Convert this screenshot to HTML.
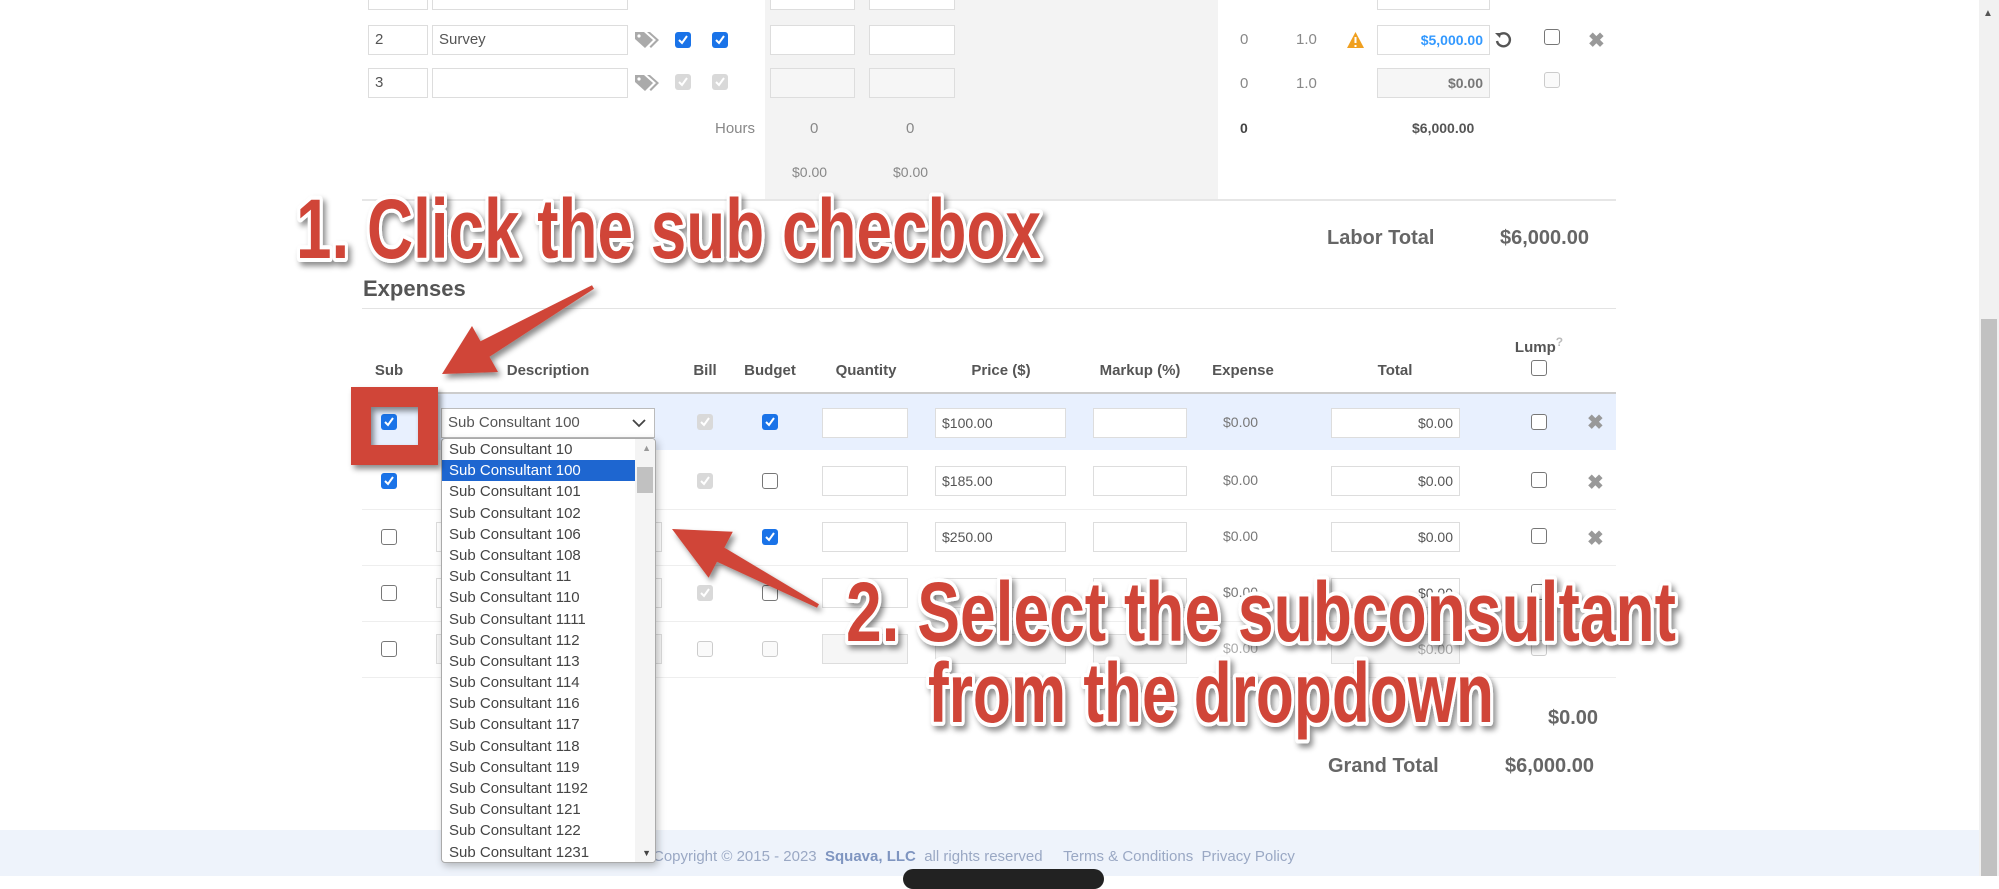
<!DOCTYPE html>
<html><head><meta charset="utf-8">
<style>
*{box-sizing:border-box;margin:0;padding:0}
body{width:1999px;height:876px;overflow:hidden;background:#fff;font-family:"Liberation Sans",Arial,sans-serif;color:#666;position:relative}
.a{position:absolute}
.in{position:absolute;background:#fff;border:1px solid #ddd;height:30px;font-size:15px;color:#555;line-height:28px;padding:0 6px}
.dis{background:#f6f6f6}
.cb{position:absolute;width:16px;height:16px;border:1.5px solid #777;border-radius:3px;background:#fff}
.cbk{position:absolute;width:16px;height:16px;border-radius:3px;background:#1a73e8}
.cbk svg,.cbg svg{position:absolute;left:2px;top:2px}
.cbg{position:absolute;width:16px;height:16px;border-radius:3px;background:#d9d9d9}
.cbd{position:absolute;width:16px;height:16px;border:1.5px solid #ccc;border-radius:3px;background:#fafafa}
.t{position:absolute;font-size:15px;color:#777;white-space:nowrap}
.h{position:absolute;font-size:15px;font-weight:bold;color:#555;white-space:nowrap;transform:translateX(-50%)}
.x{position:absolute;font-size:20px;color:#999;font-weight:bold}
.dd div{height:21.2px;line-height:21px;font-size:15px;color:#444;padding-left:7px;white-space:nowrap}
</style></head><body>

<div class="a" style="left:765px;top:0;width:453px;height:200px;background:#f3f3f3"></div>
<div class="a" style="left:362px;top:199px;width:1254px;height:2px;background:#e6e6e6"></div>

<div class="in" style="left:368px;top:-20px;width:60px"></div>
<div class="in" style="left:432px;top:-20px;width:196px"></div>
<div class="in" style="left:770px;top:-20px;width:85px"></div>
<div class="in" style="left:869px;top:-20px;width:86px"></div>
<div class="in" style="left:1377px;top:-20px;width:113px"></div>
<div class="in" style="left:368px;top:25px;width:60px">2</div>
<div class="in" style="left:432px;top:25px;width:196px">Survey</div>
<svg class="a" style="left:634px;top:30px" width="26" height="20" viewBox="0 0 26 20"><path d="M1 2h9l9 8-8 8-10-9z" fill="#aaa"/><path d="M13 2h3l9 8-8 8-1.5-1.5 6.5-6.5z" fill="#aaa"/><circle cx="5" cy="6" r="1.6" fill="#fff"/></svg>
<div class="cbk" style="left:675px;top:32px"><svg width="12" height="12"><path d="M2 6l3 3 5-7" stroke="#fff" stroke-width="2" fill="none"/></svg></div>
<div class="cbk" style="left:712px;top:32px"><svg width="12" height="12"><path d="M2 6l3 3 5-7" stroke="#fff" stroke-width="2" fill="none"/></svg></div>
<div class="in" style="left:770px;top:25px;width:85px"></div>
<div class="in" style="left:869px;top:25px;width:86px"></div>
<div class="t" style="left:1240px;top:31px;color:#888">0</div>
<div class="t" style="left:1296px;top:31px;color:#888">1.0</div>
<svg class="a" style="left:1346px;top:31px" width="19" height="18"><path d="M9.5 1L18 17H1z" fill="#f0a020"/><path d="M9.5 6v6M9.5 14v2" stroke="#fff" stroke-width="2"/></svg>
<div class="in" style="left:1377px;top:25px;width:113px;text-align:right;color:#3399ff;font-weight:bold;font-size:14px">$5,000.00</div>
<svg class="a" style="left:1494px;top:31px" width="18" height="18" viewBox="0 0 18 18"><path d="M5 4a6.5 6.5 0 1 1-2 6" stroke="#555" stroke-width="2.4" fill="none"/><path d="M1 2l6 0-1 5z" fill="#555"/></svg>
<div class="cb" style="left:1544px;top:29px"></div>
<div class="x" style="left:1588px;top:28px">✖</div>
<div class="in" style="left:368px;top:68px;width:60px">3</div>
<div class="in" style="left:432px;top:68px;width:196px"></div>
<svg class="a" style="left:634px;top:73px" width="26" height="20" viewBox="0 0 26 20"><path d="M1 2h9l9 8-8 8-10-9z" fill="#aaa"/><path d="M13 2h3l9 8-8 8-1.5-1.5 6.5-6.5z" fill="#aaa"/><circle cx="5" cy="6" r="1.6" fill="#fff"/></svg>
<div class="cbg" style="left:675px;top:74px"><svg width="12" height="12"><path d="M2 6l3 3 5-7" stroke="#fff" stroke-width="2" fill="none"/></svg></div>
<div class="cbg" style="left:712px;top:74px"><svg width="12" height="12"><path d="M2 6l3 3 5-7" stroke="#fff" stroke-width="2" fill="none"/></svg></div>
<div class="in dis" style="left:770px;top:68px;width:85px"></div>
<div class="in dis" style="left:869px;top:68px;width:86px"></div>
<div class="t" style="left:1240px;top:75px;color:#888">0</div>
<div class="t" style="left:1296px;top:75px;color:#888">1.0</div>
<div class="in dis" style="left:1377px;top:68px;width:113px;text-align:right;color:#777;font-weight:bold;font-size:14px">$0.00</div>
<div class="cbd" style="left:1544px;top:72px"></div>
<div class="t" style="left:715px;top:120px;color:#888">Hours</div>
<div class="t" style="left:810px;top:120px;color:#888">0</div>
<div class="t" style="left:906px;top:120px;color:#888">0</div>
<div class="t" style="left:1240px;top:120px;color:#444;font-weight:bold;font-size:14px">0</div>
<div class="t" style="left:1412px;top:120px;color:#555;font-weight:bold;font-size:14px">$6,000.00</div>
<div class="t" style="left:792px;top:164px;color:#888;font-size:14px">$0.00</div>
<div class="t" style="left:893px;top:164px;color:#888;font-size:14px">$0.00</div>
<div class="t" style="left:1327px;top:227px;font-size:20px;font-weight:bold;color:#666">Labor Total</div>
<div class="t" style="left:1500px;top:227px;font-size:20px;font-weight:bold;color:#666">$6,000.00</div>

<div class="t" style="left:363px;top:276px;font-size:22px;font-weight:bold;color:#555">Expenses</div>
<div class="a" style="left:362px;top:308px;width:1254px;height:1px;background:#e3e3e3"></div>
<div class="h" style="left:389px;top:362px">Sub</div>
<div class="h" style="left:548px;top:362px">Description</div>
<div class="h" style="left:705px;top:362px">Bill</div>
<div class="h" style="left:770px;top:362px">Budget</div>
<div class="h" style="left:866px;top:362px">Quantity</div>
<div class="h" style="left:1001px;top:362px">Price ($)</div>
<div class="h" style="left:1140px;top:362px">Markup (%)</div>
<div class="h" style="left:1243px;top:362px">Expense</div>
<div class="h" style="left:1395px;top:362px">Total</div>
<div class="h" style="left:1539px;top:335px">Lump<sup style="color:#bbb;font-size:12px">?</sup></div>
<div class="cb" style="left:1531px;top:360px"></div>
<div class="a" style="left:362px;top:392px;width:1254px;height:2px;background:#ccc"></div>
<div class="a" style="left:362px;top:394px;width:1254px;height:56px;background:#e8f0fe"></div>
<div class="a" style="left:362px;top:509px;width:1254px;height:1px;background:#eee"></div>
<div class="a" style="left:362px;top:565px;width:1254px;height:1px;background:#eee"></div>
<div class="a" style="left:362px;top:621px;width:1254px;height:1px;background:#eee"></div>
<div class="a" style="left:362px;top:677px;width:1254px;height:1px;background:#eee"></div>

<div class="cbk" style="left:381px;top:414px"><svg width="12" height="12"><path d="M2 6l3 3 5-7" stroke="#fff" stroke-width="2" fill="none"/></svg></div>
<div class="in" style="left:441px;top:408px;width:214px;height:30px;line-height:28px;border-color:#bbb">Sub Consultant 100<svg style="position:absolute;right:8px;top:10px" width="14" height="9"><path d="M1 1l6 6 6-6" stroke="#444" stroke-width="1.8" fill="none"/></svg></div>
<div class="cbg" style="left:697px;top:414px"><svg width="12" height="12"><path d="M2 6l3 3 5-7" stroke="#fff" stroke-width="2" fill="none"/></svg></div>
<div class="cbk" style="left:762px;top:414px"><svg width="12" height="12"><path d="M2 6l3 3 5-7" stroke="#fff" stroke-width="2" fill="none"/></svg></div>
<div class="in" style="left:822px;top:408px;width:86px"></div>
<div class="in" style="left:935px;top:408px;width:131px;font-size:14px">$100.00</div>
<div class="in" style="left:1093px;top:408px;width:94px"></div>
<div class="t" style="left:1223px;top:414px;font-size:14px">$0.00</div>
<div class="in" style="left:1331px;top:408px;width:129px;text-align:right;font-size:14px">$0.00</div>
<div class="cb" style="left:1531px;top:414px"></div>
<div class="x" style="left:1587px;top:410px">✖</div>
<div class="cbk" style="left:381px;top:473px"><svg width="12" height="12"><path d="M2 6l3 3 5-7" stroke="#fff" stroke-width="2" fill="none"/></svg></div>
<div class="cbg" style="left:697px;top:473px"><svg width="12" height="12"><path d="M2 6l3 3 5-7" stroke="#fff" stroke-width="2" fill="none"/></svg></div>
<div class="cb" style="left:762px;top:473px"></div>
<div class="in" style="left:822px;top:466px;width:86px"></div>
<div class="in" style="left:935px;top:466px;width:131px;font-size:14px">$185.00</div>
<div class="in" style="left:1093px;top:466px;width:94px"></div>
<div class="t" style="left:1223px;top:472px;font-size:14px">$0.00</div>
<div class="in" style="left:1331px;top:466px;width:129px;text-align:right;font-size:14px">$0.00</div>
<div class="cb" style="left:1531px;top:472px"></div>
<div class="x" style="left:1587px;top:470px">✖</div>
<div class="cb" style="left:381px;top:529px"></div>
<div class="in" style="left:436px;top:522px;width:226px"></div>
<div class="cbk" style="left:762px;top:529px"><svg width="12" height="12"><path d="M2 6l3 3 5-7" stroke="#fff" stroke-width="2" fill="none"/></svg></div>
<div class="in" style="left:822px;top:522px;width:86px"></div>
<div class="in" style="left:935px;top:522px;width:131px;font-size:14px">$250.00</div>
<div class="in" style="left:1093px;top:522px;width:94px"></div>
<div class="t" style="left:1223px;top:528px;font-size:14px">$0.00</div>
<div class="in" style="left:1331px;top:522px;width:129px;text-align:right;font-size:14px">$0.00</div>
<div class="cb" style="left:1531px;top:528px"></div>
<div class="x" style="left:1587px;top:526px">✖</div>
<div class="cb" style="left:381px;top:585px"></div>
<div class="in" style="left:436px;top:578px;width:226px"></div>
<div class="cbg" style="left:697px;top:585px"><svg width="12" height="12"><path d="M2 6l3 3 5-7" stroke="#fff" stroke-width="2" fill="none"/></svg></div>
<div class="cb" style="left:762px;top:585px"></div>
<div class="in" style="left:822px;top:578px;width:86px"></div>
<div class="in" style="left:935px;top:578px;width:131px"></div>
<div class="in" style="left:1093px;top:578px;width:94px"></div>
<div class="t" style="left:1223px;top:584px;font-size:14px">$0.00</div>
<div class="in" style="left:1331px;top:578px;width:129px;text-align:right;font-size:14px">$0.00</div>
<div class="cb" style="left:1531px;top:584px"></div>
<div class="cb" style="left:381px;top:641px"></div>
<div class="in dis" style="left:436px;top:634px;width:226px"></div>
<div class="cbd" style="left:697px;top:641px"></div>
<div class="cbd" style="left:762px;top:641px"></div>
<div class="in dis" style="left:822px;top:634px;width:86px"></div>
<div class="in dis" style="left:935px;top:634px;width:131px"></div>
<div class="in dis" style="left:1093px;top:634px;width:94px"></div>
<div class="t" style="left:1223px;top:640px;font-size:14px;color:#aaa">$0.00</div>
<div class="in dis" style="left:1331px;top:634px;width:129px;text-align:right;font-size:14px;color:#aaa">$0.00</div>
<div class="cbd" style="left:1531px;top:640px"></div>

<div class="t" style="left:1548px;top:707px;font-size:20px;font-weight:bold;color:#666">$0.00</div>
<div class="t" style="left:1328px;top:755px;font-size:20px;font-weight:bold;color:#666">Grand Total</div>
<div class="t" style="left:1505px;top:755px;font-size:20px;font-weight:bold;color:#666">$6,000.00</div>

<div class="a" style="left:0;top:830px;width:1979px;height:46px;background:#eef3fb"></div>
<div class="t" style="left:653px;top:848px;font-size:15px;color:#9aa8c4">Copyright © 2015 - 2023 &nbsp;<b style="color:#7f95c0">Squava, LLC</b> &nbsp;all rights reserved &nbsp;&nbsp;&nbsp; Terms &amp; Conditions &nbsp;Privacy Policy</div>
<div class="a" style="left:903px;top:869px;width:201px;height:20px;border-radius:10px;background:#222"></div>

<div class="a" style="left:1979px;top:0;width:20px;height:876px;background:#f1f1f1"></div>
<div class="a" style="left:1981px;top:319px;width:16px;height:557px;background:#c1c1c1"></div>
<div class="a" style="left:1983px;top:8px;font-size:10px;color:#555">▲</div>

<div class="a dd" style="left:441px;top:438px;width:215px;height:425px;background:#fff;border:1px solid #aaa;border-radius:4px;box-shadow:2px 3px 8px rgba(0,0,0,.25);overflow:hidden">
<div>Sub Consultant 10</div>
<div style="background:#1e66d0;color:#fff;margin-right:20px">Sub Consultant 100</div>
<div>Sub Consultant 101</div>
<div>Sub Consultant 102</div>
<div>Sub Consultant 106</div>
<div>Sub Consultant 108</div>
<div>Sub Consultant 11</div>
<div>Sub Consultant 110</div>
<div>Sub Consultant 1111</div>
<div>Sub Consultant 112</div>
<div>Sub Consultant 113</div>
<div>Sub Consultant 114</div>
<div>Sub Consultant 116</div>
<div>Sub Consultant 117</div>
<div>Sub Consultant 118</div>
<div>Sub Consultant 119</div>
<div>Sub Consultant 1192</div>
<div>Sub Consultant 121</div>
<div>Sub Consultant 122</div>
<div>Sub Consultant 1231</div>
<div class="a" style="right:0;top:0;width:20px;height:425px;background:#f4f4f4;padding:0"></div>
<div class="a" style="right:2px;top:28px;width:16px;height:26px;background:#c1c1c1;padding:0"></div>
<div class="a" style="right:4px;top:4px;font-size:9px;color:#999;padding:0;height:auto;line-height:10px">▲</div>
<div class="a" style="right:4px;bottom:4px;font-size:9px;color:#444;padding:0;height:auto;line-height:10px">▼</div>
</div>

<svg class="a" style="left:0;top:0" width="1999" height="876">
<defs><filter id="sh" x="-10%" y="-20%" width="130%" height="150%"><feDropShadow dx="3" dy="4" stdDeviation="3" flood-color="#000" flood-opacity="0.45"/></filter></defs>
<g filter="url(#sh)">
<rect x="361" y="397" width="67" height="58" fill="none" stroke="#d04437" stroke-width="20"/>
<polygon points="442,374 498,372 489.5,356.8 594,288.7 592,285.3 480.5,341.2 472,326" fill="#d04437"/>
<polygon points="672,529 708.6,577.7 717,561.8 817,607.8 819,604.2 724.4,547.6 732.8,531.7" fill="#d04437"/>
<g font-family="Liberation Sans, Arial, sans-serif" font-weight="bold" font-size="84" fill="#d04437" stroke="#fff" stroke-width="8" paint-order="stroke" stroke-linejoin="round">
<text x="296" y="258" textLength="745" lengthAdjust="spacingAndGlyphs">1. Click the sub checbox</text>
<text x="846" y="641" textLength="830" lengthAdjust="spacingAndGlyphs">2. Select the subconsultant</text>
<text x="928" y="722" textLength="566" lengthAdjust="spacingAndGlyphs">from the dropdown</text>
</g>
</g>
</svg>
</body></html>
